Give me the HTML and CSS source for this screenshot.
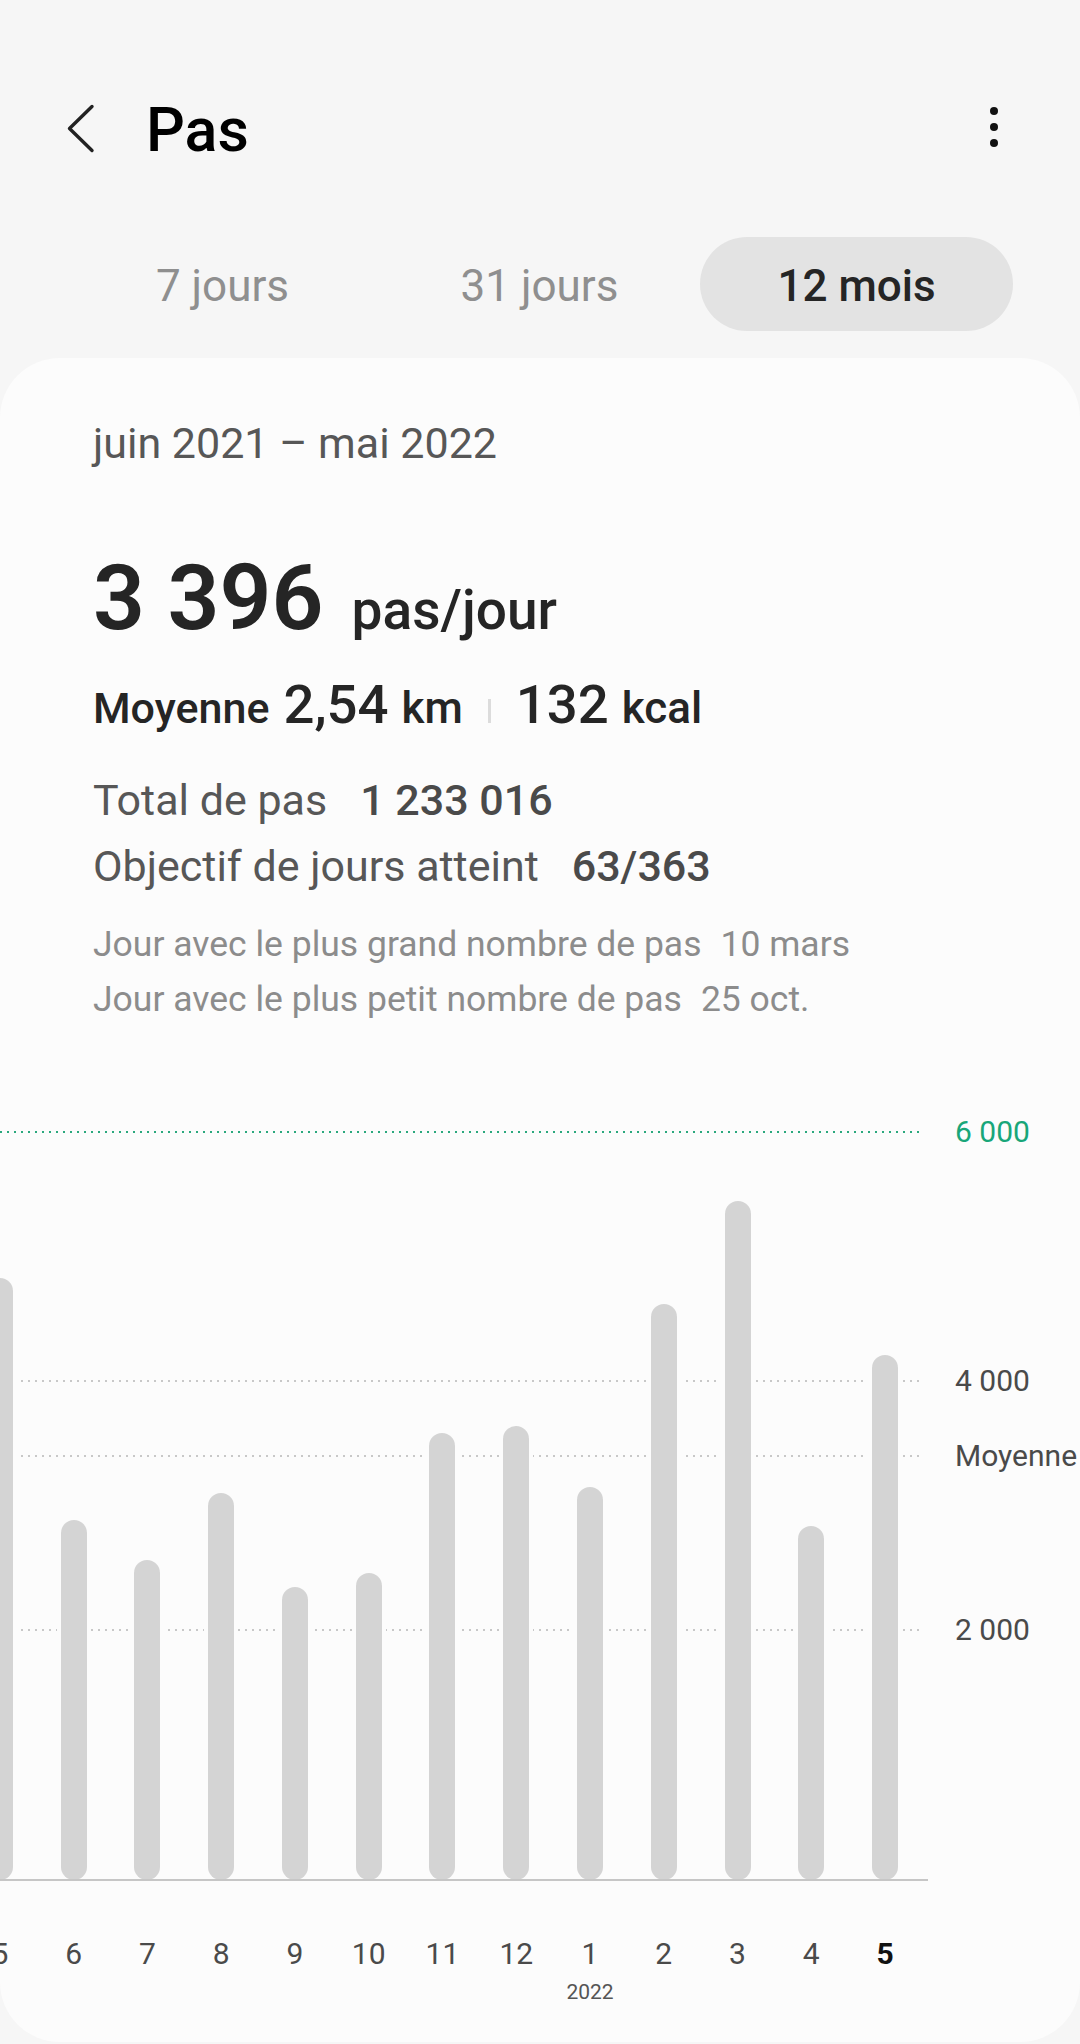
FILE: index.html
```html
<!DOCTYPE html>
<html lang="fr">
<head>
<meta charset="utf-8">
<title>Pas</title>
<link rel="stylesheet" href="styles.css">
</head>
<body>
<header class="header">
  <svg class="back" width="32" height="52" viewBox="0 0 32 52"><polyline points="28,4.5 5.5,26.5 28,48.5" fill="none" stroke="#222" stroke-width="3.4" stroke-linecap="round" stroke-linejoin="round"/></svg>
  <h1 class="title">Pas</h1>
  <svg class="more" width="10" height="44" viewBox="0 0 10 44"><circle cx="5" cy="5" r="4" fill="#111"/><circle cx="5" cy="21" r="4" fill="#111"/><circle cx="5" cy="37" r="4" fill="#111"/></svg>
</header>

<nav class="tabs">
  <div class="tab">7 jours</div>
  <div class="tab">31 jours</div>
  <div class="tab active">12 mois</div>
</nav>

<main class="card">
  <section class="summary">
    <div class="date">juin 2021 – mai 2022</div>
    <div class="big">
      <span class="big-num">3 396</span>
      <span class="big-unit">pas/jour</span>
    </div>
    <div class="avg">
      <span class="avg-lbl">Moyenne</span>
      <span class="avg-num first">2,54</span>
      <span class="avg-unit">km</span>
      <span class="sep"></span>
      <span class="avg-num">132</span>
      <span class="avg-unit">kcal</span>
    </div>
    <div class="stat total"><span>Total de pas</span><span class="v">1 233 016</span></div>
    <div class="stat goal-row"><span>Objectif de jours atteint</span><span class="v">63/363</span></div>
    <div class="note hi"><span>Jour avec le plus grand nombre de pas</span><span>10 mars</span></div>
    <div class="note lo"><span>Jour avec le plus petit nombre de pas</span><span>25 oct.</span></div>
  </section>

  <section class="chart">
    <div class="plot">
      <div class="gl goal" style="top:0px"><span class="gl-label">6 000</span></div>
      <div class="gl" style="top:249px"><span class="gl-label">4 000</span></div>
      <div class="gl" style="top:324px"><span class="gl-label">Moyenne</span></div>
      <div class="gl" style="top:498px"><span class="gl-label">2 000</span></div>
      <div class="bars">
        <div class="col"><div class="bar" style="height:602px"></div></div>
        <div class="col"><div class="bar" style="height:360px"></div></div>
        <div class="col"><div class="bar" style="height:320px"></div></div>
        <div class="col"><div class="bar" style="height:387px"></div></div>
        <div class="col"><div class="bar" style="height:293px"></div></div>
        <div class="col"><div class="bar" style="height:307px"></div></div>
        <div class="col"><div class="bar" style="height:447px"></div></div>
        <div class="col"><div class="bar" style="height:454px"></div></div>
        <div class="col"><div class="bar" style="height:393px"></div></div>
        <div class="col"><div class="bar" style="height:576px"></div></div>
        <div class="col"><div class="bar" style="height:679px"></div></div>
        <div class="col"><div class="bar" style="height:354px"></div></div>
        <div class="col"><div class="bar" style="height:525px"></div></div>
      </div>
      <div class="axis"></div>
    </div>
    <div class="xlabels">
      <div class="xl">5</div>
      <div class="xl">6</div>
      <div class="xl">7</div>
      <div class="xl">8</div>
      <div class="xl">9</div>
      <div class="xl">10</div>
      <div class="xl">11</div>
      <div class="xl">12</div>
      <div class="xl"><span>1</span><span class="year">2022</span></div>
      <div class="xl">2</div>
      <div class="xl">3</div>
      <div class="xl">4</div>
      <div class="xl cur">5</div>
    </div>
  </section>
</main>
</body>
</html>
```

FILE: styles.css
```css
* { box-sizing: content-box; }

body {
  margin: 0;
  width: 1080px;
  background: #f6f6f6;
  font-family: Roboto, "Noto Sans", "Liberation Sans", sans-serif;
  color: #252525;
}

.header {
  display: flex;
  align-items: center;
  height: 124px;
  padding: 66px 81px 0 64px;
}

.back { flex: none; display: block; }
.more { flex: none; display: block; }

.title {
  flex: 1;
  margin: 5px 0 0 50px;
  font-size: 61px;
  line-height: 1;
  font-weight: 500;
  color: #000;
}

.tabs {
  display: grid;
  grid-template-columns: repeat(3, 1fr);
  column-gap: 4px;
  height: 94px;
  margin: 47px 67px 0 66px;
}

.tab {
  display: flex;
  align-items: center;
  justify-content: center;
  padding-top: 4px;
  height: 90px;
  border-radius: 47px;
  font-size: 44px;
  line-height: 1;
  color: #8f8f8f;
}

.tab.active {
  background: #e3e3e3;
  color: #252525;
  font-weight: 500;
}

.card {
  margin-top: 27px;
  background: #fcfcfc;
  border-radius: 60px;
  overflow: hidden;
  padding: 64px 0 39px;
}

.summary { padding-left: 93px; }

.date {
  font-size: 43px;
  line-height: 1;
  color: #575757;
}

.big {
  display: flex;
  align-items: baseline;
  gap: 28px;
  margin-top: 88px;
  line-height: 1;
}

.big-num {
  font-size: 91px;
  font-weight: 600;
  color: #252525;
}

.big-unit {
  font-size: 55px;
  font-weight: 500;
  color: #252525;
}

.avg {
  display: flex;
  align-items: baseline;
  margin-top: 33px;
  line-height: 1;
  font-weight: 500;
  color: #252525;
}

.avg-lbl { font-size: 43px; }
.avg-num { font-size: 54.5px; margin-left: 16px; }
.avg-num.first { margin-left: 14px; }
.avg-unit { font-size: 44px; margin-left: 13px; }

.sep {
  width: 3px;
  height: 24px;
  margin: 0 9px 0 25px;
  background: #dcdcdc;
}

.stat {
  display: flex;
  gap: 33px;
  font-size: 43px;
  line-height: 1;
  color: #575757;
}

.stat .v {
  font-weight: 500;
  color: #4a4a4a;
}

.total { margin-top: 47px; }
.goal-row { margin-top: 23px; }

.note {
  display: flex;
  gap: 19px;
  font-size: 35.5px;
  line-height: 1;
  color: #8c8c8c;
}

.hi { margin-top: 39px; }
.lo { margin-top: 20px; }

.chart { margin-top: 114px; }

.plot {
  position: relative;
  height: 748px;
}

.gl {
  position: absolute;
  left: 0;
  width: 100%;
  height: 0;
}

.gl::before {
  content: "";
  position: absolute;
  left: 0;
  top: -1px;
  width: 923px;
  height: 2px;
  background: repeating-linear-gradient(to right, #c8c8c8 0 2px, transparent 2px 7px);
}

.gl.goal::before {
  background: repeating-linear-gradient(to right, #2aa87d 0 2px, transparent 2px 7px);
}

.gl-label {
  position: absolute;
  left: 955px;
  top: -15px;
  font-size: 30px;
  line-height: 30px;
  white-space: nowrap;
  color: #4a4a4a;
}

.gl.goal .gl-label { color: #19a679; }

.bars {
  position: relative;
  z-index: 1;
  display: flex;
  align-items: flex-end;
  width: 959px;
  height: 748px;
  margin-left: -37px;
}

.col {
  flex: 1;
  display: flex;
  justify-content: center;
  align-items: flex-end;
  height: 100%;
}

.bar {
  width: 26px;
  border-radius: 13px;
  background: #d4d4d4;
  box-shadow: 0 0 0 4px #fcfcfc;
}

.axis {
  position: absolute;
  z-index: 2;
  left: 0;
  top: 747px;
  width: 928px;
  height: 2px;
  background: #c6c6c6;
}

.xlabels {
  display: flex;
  width: 959px;
  margin-left: -37px;
  margin-top: 59px;
}

.xl {
  flex: 1;
  display: flex;
  flex-direction: column;
  align-items: center;
  font-size: 30px;
  line-height: 1;
  color: #4a4a4a;
}

.xl.cur {
  font-weight: 700;
  color: #111;
}

.year {
  margin-top: 13px;
  font-size: 21px;
  color: #555;
}
```
